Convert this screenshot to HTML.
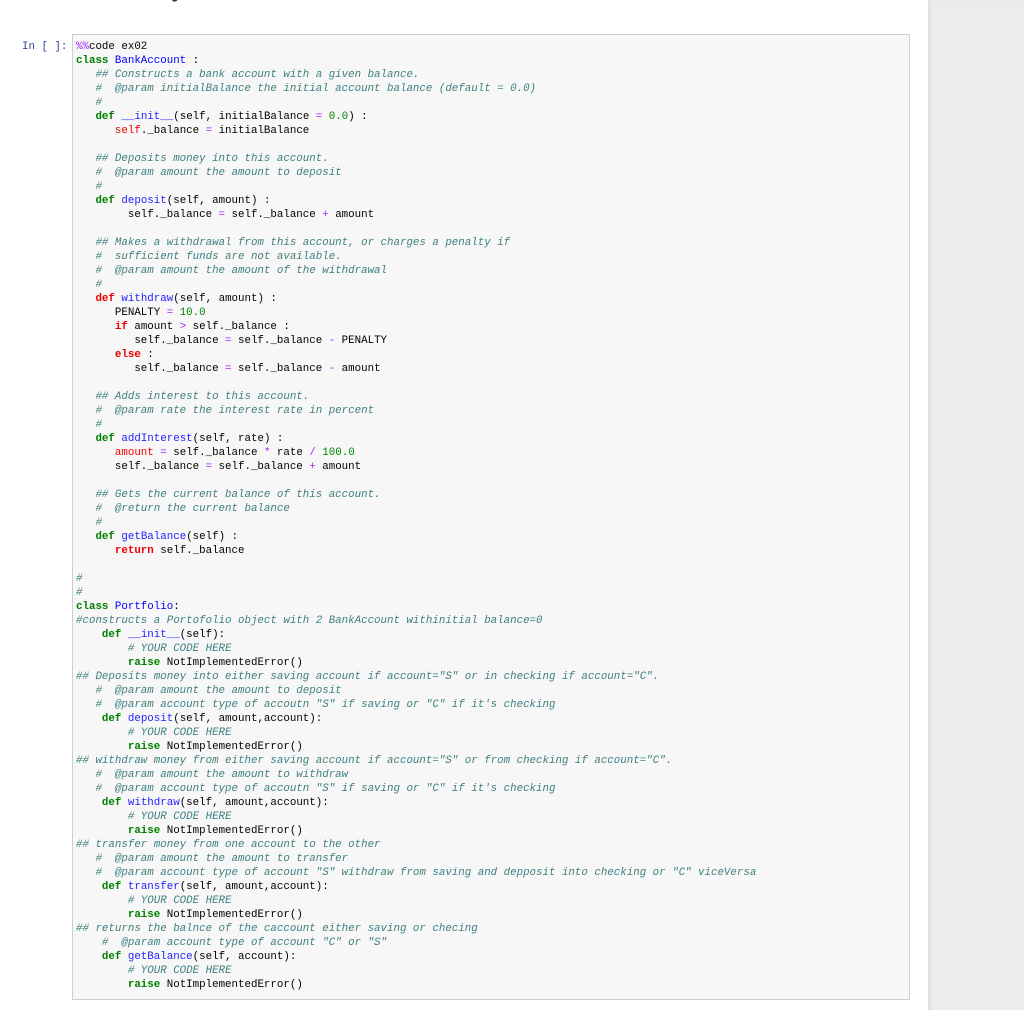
<!DOCTYPE html>
<html><head><meta charset="utf-8"><style>
html,body{margin:0;padding:0;width:1024px;height:1010px;background:#fff;overflow:hidden;position:relative;font-family:"Liberation Sans",sans-serif}
.panel{position:absolute;left:928px;top:0;width:96px;height:1010px;background:#ececec;box-shadow:inset 4px 0 4px -2px #ddd}
.top{position:absolute;left:126px;top:-9px;font-family:"Liberation Mono",monospace;font-size:10.8px;color:#000;font-weight:bold}
.prompt{position:absolute;left:22px;top:40px;font-family:"Liberation Mono",monospace;font-size:10.8px;line-height:14px;color:#303f9f}
.cell{position:absolute;left:72px;top:34px;width:836px;height:964px;background:#f7f7f7;border:1px solid #cfcfcf}
pre{margin:0;position:absolute;left:3px;top:5px;font-family:"Liberation Mono",monospace;font-size:10.8px;line-height:14px;color:#000}
.k{color:#008000;font-weight:bold}
.r{color:#e00}
.rk{color:#e00;font-weight:bold}
.n{color:#00f}
.f{color:#22f}
.c{color:#408080;font-style:italic}
.o{color:#a2f}
.m{color:#080}
</style></head><body>
<div class="top">checking balance = 1000.</div>
<div class="panel"></div>
<div class="prompt">In [ ]:</div>
<div class="cell"><pre><span class="o">%%</span>code ex02
<span class="k">class</span> <span class="n">BankAccount</span> :
   <span class="c">## Constructs a bank account with a given balance.</span>
   <span class="c">#  @param initialBalance the initial account balance (default = 0.0)</span>
   <span class="c">#</span>
   <span class="k">def</span> <span class="f">__init__</span>(self, initialBalance <span class="o">=</span> <span class="m">0.0</span>) :
      <span class="r">self</span>._balance <span class="o">=</span> initialBalance

   <span class="c">## Deposits money into this account.</span>
   <span class="c">#  @param amount the amount to deposit</span>
   <span class="c">#</span>
   <span class="k">def</span> <span class="f">deposit</span>(self, amount) :
        self._balance <span class="o">=</span> self._balance <span class="o">+</span> amount

   <span class="c">## Makes a withdrawal from this account, or charges a penalty if</span>
   <span class="c">#  sufficient funds are not available.</span>
   <span class="c">#  @param amount the amount of the withdrawal</span>
   <span class="c">#</span>
   <span class="rk">def</span> <span class="f">withdraw</span>(self, amount) :
      PENALTY <span class="o">=</span> <span class="m">10.0</span>
      <span class="rk">if</span> amount <span class="o">&gt;</span> self._balance :
         self._balance <span class="o">=</span> self._balance <span class="o">-</span> PENALTY
      <span class="rk">else</span> :
         self._balance <span class="o">=</span> self._balance <span class="o">-</span> amount

   <span class="c">## Adds interest to this account.</span>
   <span class="c">#  @param rate the interest rate in percent</span>
   <span class="c">#</span>
   <span class="k">def</span> <span class="f">addInterest</span>(self, rate) :
      <span class="r">amount</span> <span class="o">=</span> self._balance <span class="o">*</span> rate <span class="o">/</span> <span class="m">100.0</span>
      self._balance <span class="o">=</span> self._balance <span class="o">+</span> amount

   <span class="c">## Gets the current balance of this account.</span>
   <span class="c">#  @return the current balance</span>
   <span class="c">#</span>
   <span class="k">def</span> <span class="f">getBalance</span>(self) :
      <span class="rk">return</span> self._balance

<span class="c">#</span>
<span class="c">#</span>
<span class="k">class</span> <span class="n">Portfolio</span>:
<span class="c">#constructs a Portofolio object with 2 BankAccount withinitial balance=0</span>
    <span class="k">def</span> <span class="f">__init__</span>(self):
        <span class="c"># YOUR CODE HERE</span>
        <span class="k">raise</span> NotImplementedError()
<span class="c">## Deposits money into either saving account if account="S" or in checking if account="C".</span>
   <span class="c">#  @param amount the amount to deposit</span>
   <span class="c">#  @param account type of accoutn "S" if saving or "C" if it's checking</span>
    <span class="k">def</span> <span class="f">deposit</span>(self, amount,account):
        <span class="c"># YOUR CODE HERE</span>
        <span class="k">raise</span> NotImplementedError()
<span class="c">## withdraw money from either saving account if account="S" or from checking if account="C".</span>
   <span class="c">#  @param amount the amount to withdraw</span>
   <span class="c">#  @param account type of accoutn "S" if saving or "C" if it's checking</span>
    <span class="k">def</span> <span class="f">withdraw</span>(self, amount,account):
        <span class="c"># YOUR CODE HERE</span>
        <span class="k">raise</span> NotImplementedError()
<span class="c">## transfer money from one account to the other</span>
   <span class="c">#  @param amount the amount to transfer</span>
   <span class="c">#  @param account type of account "S" withdraw from saving and depposit into checking or "C" viceVersa</span>
    <span class="k">def</span> <span class="f">transfer</span>(self, amount,account):
        <span class="c"># YOUR CODE HERE</span>
        <span class="k">raise</span> NotImplementedError()
<span class="c">## returns the balnce of the caccount either saving or checing</span>
    <span class="c">#  @param account type of account "C" or "S"</span>
    <span class="k">def</span> <span class="f">getBalance</span>(self, account):
        <span class="c"># YOUR CODE HERE</span>
        <span class="k">raise</span> NotImplementedError()</pre></div>
</body></html>
